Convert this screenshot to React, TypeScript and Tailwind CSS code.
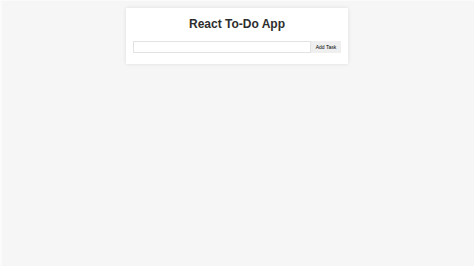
import React from "react";

export default function App() {
  return (
    <div className="min-h-[266px] w-full bg-[#f6f6f6] pt-[7px] border-l-[2px] border-t-[1px] border-l-[#fbfbfb] border-t-[#fbfbfb]" style={{ fontFamily: '"Liberation Sans", Arial, sans-serif' }}>
      <div className="mx-auto w-[222px] bg-white px-[7px] pt-[7px] pb-[11px] shadow-[0_0_4px_rgba(0,0,0,0.1)] translate-x-[-1px]">
        <h1 className="mt-[2px] text-center text-[12px] font-bold leading-[14px] text-[#2e2e2e]">React To-Do App</h1>
        <div className="mt-[10px] flex h-[12px]">
          <input
            type="text"
            className="h-[12px] w-[178px] border border-[#e2e2e2] bg-white outline-none"
          />
          <button className="h-[12px] flex-1 bg-[#efefef] text-[5px] leading-[12px] text-black">Add Task</button>
        </div>
      </div>
    </div>
  );
}
